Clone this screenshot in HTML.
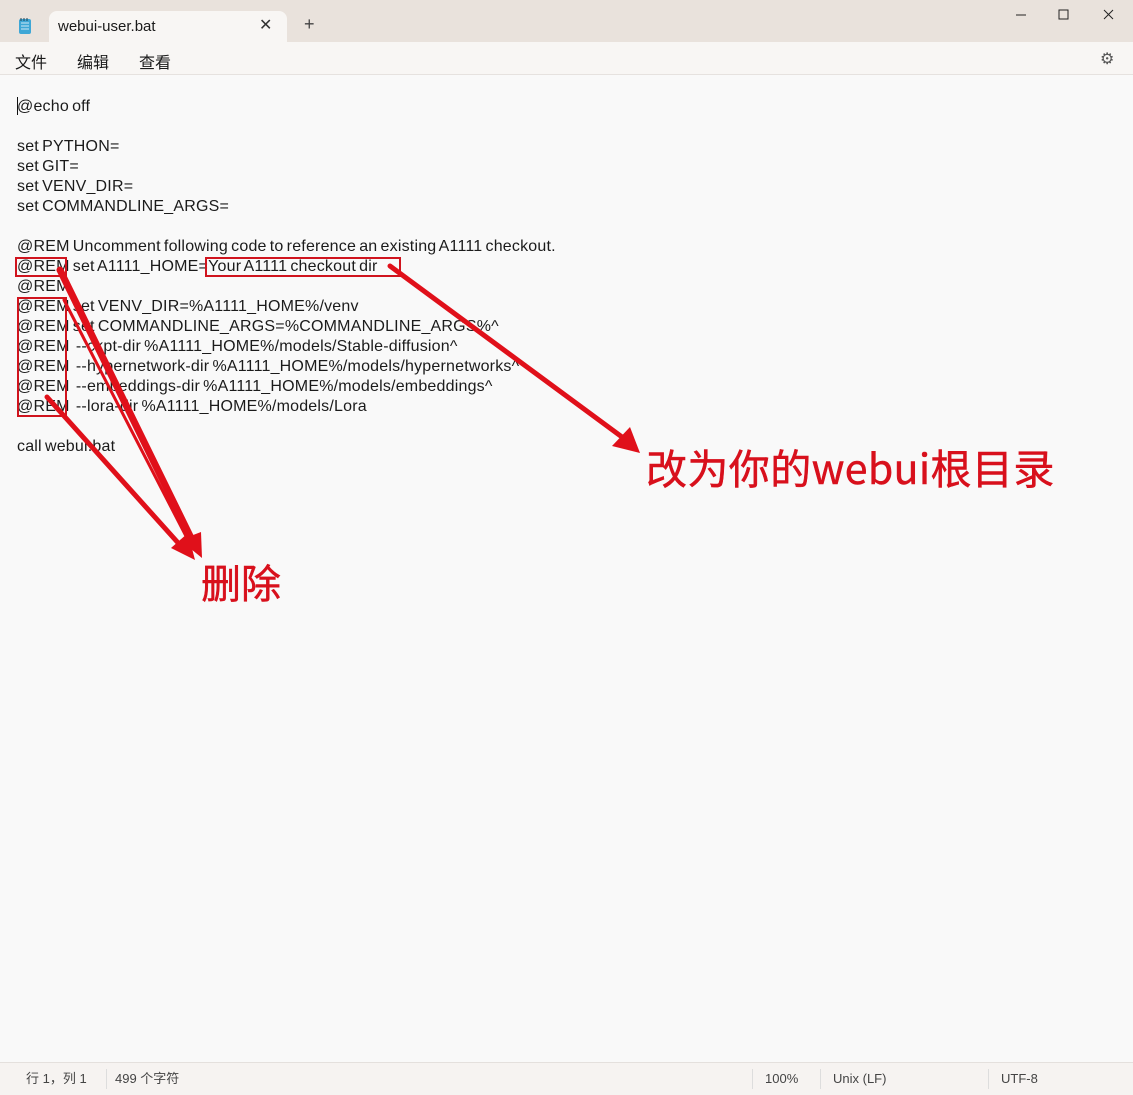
<!DOCTYPE html>
<html><head><meta charset="utf-8"><style>
*{margin:0;padding:0;box-sizing:border-box}
body{width:1133px;height:1095px;overflow:hidden;background:#f9f9f9;font-family:"Liberation Sans","Noto Sans CJK SC",sans-serif;position:relative}
.title{position:absolute;left:0;top:0;width:1133px;height:42px;background:#e9e2dc}
.tab{position:absolute;left:49px;top:11px;width:238px;height:31px;background:#f8f6f4;border-radius:8px 8px 0 0}
.menu{position:absolute;left:0;top:42px;width:1133px;height:33px;background:#f8f6f4;border-bottom:1px solid #e6e2df}
.t{position:absolute;font-size:15px;color:#1a1a1a;white-space:pre}
.ed{position:absolute;left:17px;top:97px;font-size:16px;line-height:20px;color:#1b1b1b;white-space:pre;letter-spacing:0.2px;word-spacing:-1.5px}
.status{position:absolute;left:0;top:1062px;width:1133px;height:33px;background:#f6f3f1;border-top:1px solid #e4e0dd;font-size:13px;color:#444}
.status span{position:absolute;top:7px;line-height:18px;height:18px}
.sep{position:absolute;top:6px;width:1px;height:20px;background:#ddd}
.red{position:absolute;white-space:pre;color:#d8101c;font-family:'Noto Sans CJK SC','Liberation Sans',sans-serif;-webkit-text-stroke:0.5px #d8101c}
</style></head><body>
<div class="title"></div>
<div class="tab"></div>
<svg style="position:absolute;left:18px;top:17px" width="14" height="18"><rect x="1" y="2" width="12" height="15" rx="2" fill="#3ea7d6"/><path d="M3 6h8M3 9h8M3 12h8" stroke="#cdeaf6" stroke-width="1"/><path d="M3 1v3M6 1v3M9 1v3" stroke="#245" stroke-width="1"/></svg>
<div class="t" style="left:58px;top:18px;font-size:15px">webui-user.bat</div>
<div class="t" style="left:259px;top:15px;font-size:16px;color:#333">✕</div>
<div class="t" style="left:304px;top:14px;font-size:18px;color:#444">+</div>
<svg style="position:absolute;left:1010px;top:8px" width="110" height="16"><path d="M6 7h10" stroke="#222" stroke-width="1"/><rect x="49" y="2" width="9" height="9" fill="none" stroke="#222"/><path d="M94 2l9 9M103 2l-9 9" stroke="#222"/></svg>
<div class="menu"></div>
<div class="t" style="left:15px;top:49px;font-size:16px">文件</div>
<div class="t" style="left:77px;top:49px;font-size:16px">编辑</div>
<div class="t" style="left:139px;top:49px;font-size:16px">查看</div>
<div class="t" style="left:1100px;top:49px;font-size:16px;color:#555">⚙</div>
<div style="position:absolute;left:17px;top:97px;width:1px;height:18px;background:#111"></div>
<div class="ed">@echo off

set PYTHON=
set GIT=
set VENV_DIR=
set COMMANDLINE_ARGS=

@REM Uncomment following code to reference an existing A1111 checkout.
@REM set A1111_HOME=Your A1111 checkout dir
@REM
@REM set VENV_DIR=%A1111_HOME%/venv
@REM set COMMANDLINE_ARGS=%COMMANDLINE_ARGS%^
@REM  --ckpt-dir %A1111_HOME%/models/Stable-diffusion^
@REM  --hypernetwork-dir %A1111_HOME%/models/hypernetworks^
@REM  --embeddings-dir %A1111_HOME%/models/embeddings^
@REM  --lora-dir %A1111_HOME%/models/Lora

call webui.bat</div>
<svg style="position:absolute;left:0;top:0" width="1133" height="1095">
<g fill="none" stroke="#d0141e" stroke-width="2">
<rect x="16" y="258" width="50" height="18"/>
<rect x="206" y="258" width="194" height="18"/>
<rect x="18" y="298" width="48" height="118"/>
</g>
<g stroke="#e0101a" stroke-linecap="round">
<line x1="390" y1="266" x2="622" y2="437" stroke-width="5"/>
<line x1="60" y1="270" x2="192" y2="540" stroke-width="7"/>
<line x1="64" y1="300" x2="188" y2="540" stroke-width="3"/>
<line x1="47" y1="397" x2="180" y2="545" stroke-width="5"/>
</g>
<g fill="#e0101a">
<polygon points="640,453 612,446 630,427"/>
<polygon points="202,558 180,540 201,532"/>
<polygon points="195,560 171,548 188,533"/>
</g>
</svg>
<div class="red" style="left:646px;top:436px;font-size:41px;letter-spacing:0.4px">改为你的webui根目录</div>
<div class="red" style="left:201px;top:552px;font-size:40px">删除</div>
<div class="status">
<span style="left:26px">行 1，列 1</span><div class="sep" style="left:106px"></div>
<span style="left:115px">499 个字符</span>
<div class="sep" style="left:752px"></div><span style="left:765px">100%</span>
<div class="sep" style="left:820px"></div><span style="left:833px">Unix (LF)</span>
<div class="sep" style="left:988px"></div><span style="left:1001px">UTF-8</span>
</div>
</body></html>
